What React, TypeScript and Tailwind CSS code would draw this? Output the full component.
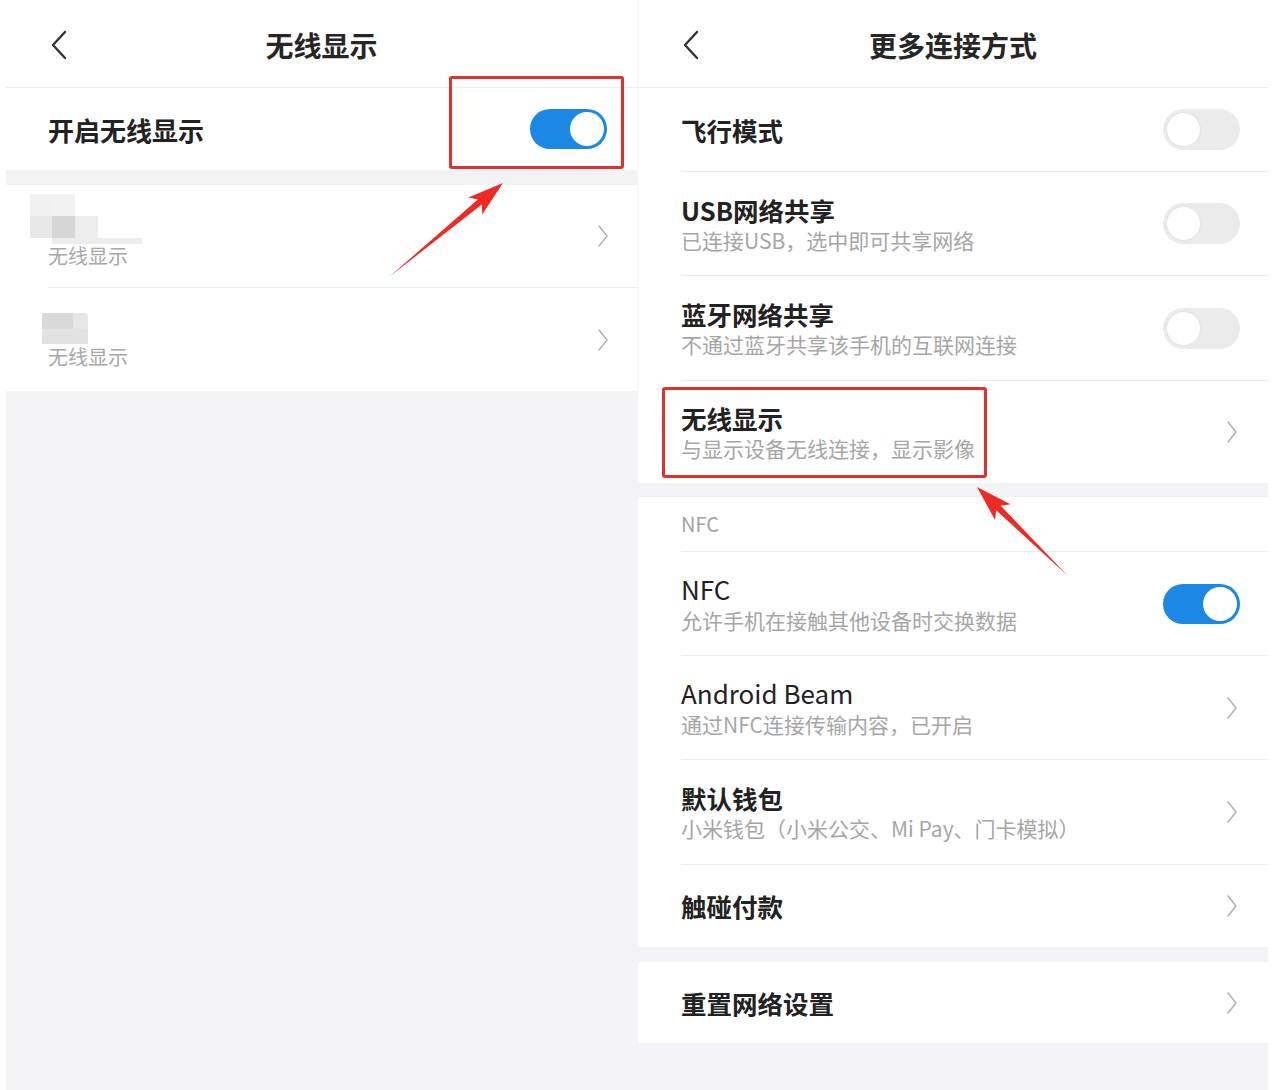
import React from "react";

const FONT = "font-['Noto_Sans_CJK_SC','Noto_Sans',sans-serif]";

function Back() {
  return (
    <svg width="18" height="30" viewBox="0 0 18 30" fill="none">
      <path d="M15 2 L3 15 L15 28" stroke="#333" strokeWidth="2.4" strokeLinecap="round" strokeLinejoin="round" />
    </svg>
  );
}

function Chevron() {
  return (
    <svg width="12" height="24" viewBox="0 0 12 24" fill="none">
      <path d="M2 2 L10 12 L2 22" stroke="#b4b4b4" strokeWidth="1.6" strokeLinecap="round" strokeLinejoin="round" />
    </svg>
  );
}

function Toggle({ on }: { on: boolean }) {
  if (on) {
    return (
      <div className="w-[77px] h-[40px] rounded-full bg-[#1b88e6] flex items-center justify-end pr-[3px] shrink-0">
        <div className="w-[34px] h-[34px] rounded-full bg-white" />
      </div>
    );
  }
  return (
    <div className="w-[77px] h-[41px] rounded-full bg-[#ebebeb] flex items-center pl-[3px] shrink-0">
      <div className="w-[35px] h-[35px] rounded-full bg-white border border-[#e2e2e2]" />
    </div>
  );
}

function Header({ title }: { title: string }) {
  return (
    <div className="h-[88px] border-b border-[#ececec] flex items-center relative">
      <div className="pl-[44px] pt-[2px] absolute left-0">
        <Back />
      </div>
      <div className="flex-1 text-center text-[28px] font-bold text-[#262626] pt-[2px]">{title}</div>
    </div>
  );
}

type Item = {
  title: string;
  sub?: string;
  right: "on" | "off" | "arrow";
  h: number;
  latin?: boolean;
  line?: boolean;
};

const ITEMS_TOP: Item[] = [
  { title: "飞行模式", right: "off", h: 84, line: true },
  { title: "USB网络共享", sub: "已连接USB，选中即可共享网络", right: "off", h: 104, line: true },
  { title: "蓝牙网络共享", sub: "不通过蓝牙共享该手机的互联网连接", right: "off", h: 105, line: true },
  { title: "无线显示", sub: "与显示设备无线连接，显示影像", right: "arrow", h: 102 },
];

const ITEMS_NFC: Item[] = [
  { title: "NFC", sub: "允许手机在接触其他设备时交换数据", right: "on", h: 104, latin: true, line: true },
  { title: "Android Beam", sub: "通过NFC连接传输内容，已开启", right: "arrow", h: 104, latin: true, line: true },
  { title: "默认钱包", sub: "小米钱包（小米公交、Mi Pay、门卡模拟）", right: "arrow", h: 105, line: true },
  { title: "触碰付款", right: "arrow", h: 82 },
];

function Row({ item }: { item: Item }) {
  return (
    <div className="pl-[43px]">
      <div
        className={`flex items-center justify-between pr-[28px] ${item.line ? "border-b border-[#ededed]" : ""}`}
        style={{ height: item.h }}
      >
        <div className={`flex flex-col ${item.latin ? "pb-[5px]" : ""}`}>
          <div
            className={`text-[#222] ${item.latin ? "text-[26px] leading-[38px] font-normal" : "text-[25.5px] leading-[32px] font-semibold"}`}
          >
            {item.title}
          </div>
          {item.sub && (
            <div className={`text-[21px] text-[#a6a6a6] ${item.latin ? "leading-[24px]" : "leading-[28px]"}`}>
              {item.sub}
            </div>
          )}
        </div>
        {item.right === "arrow" ? (
          <div className="pr-[2px]">
            <Chevron />
          </div>
        ) : (
          <Toggle on={item.right === "on"} />
        )}
      </div>
    </div>
  );
}

function Arrow({ x1, y1, x2, y2 }: { x1: number; y1: number; x2: number; y2: number }) {
  const L = Math.hypot(x2 - x1, y2 - y1);
  const a = (Math.atan2(y2 - y1, x2 - x1) * 180) / Math.PI;
  return (
    <g transform={`translate(${x1} ${y1}) rotate(${a})`}>
      <polygon
        points={`0,0 ${L - 30},-3.2 ${L - 36},-11 ${L},0 ${L - 36},11 ${L - 30},3.2`}
        fill="#ee2a24"
      />
    </g>
  );
}

export default function App() {
  return (
    <div className={`relative w-[1280px] h-[1090px] bg-white flex ${FONT}`}>
      {/* left screen */}
      <div className="w-[637px] pl-[6px] flex flex-col">
        <Header title="无线显示" />
        <div className="h-[82px] flex items-center justify-between pl-[42px] pr-[30px]">
          <span className="text-[26px] font-semibold text-[#222]">开启无线显示</span>
          <Toggle on />
        </div>
        <div className="h-[15px] bg-[#f3f3f5]" />
        <div className="pl-[42px]">
          <div className="h-[103px] border-b border-[#ededed] flex items-center justify-between pr-[28px]">
            <div className="flex flex-col -ml-[18px] pb-[10px]">
              <div className="flex">
                <div className="w-[22px] h-[22px] bg-[#f1f1f1]" />
                <div className="w-[23px] h-[22px] bg-[#f2f2f2]" />
              </div>
              <div className="flex">
                <div className="w-[22px] h-[22px] bg-[#e8e8e8]" />
                <div className="w-[23px] h-[22px] bg-[#d6d6d6]" />
                <div className="w-[23px] h-[22px] bg-[#ededed]" />
              </div>
              <div className="ml-[22px] w-[90px] h-[6px] bg-[#ececec]" />
              <div className="ml-[18px] text-[20px] leading-[24px] text-[#a8a8a8]">无线显示</div>
            </div>
            <Chevron />
          </div>
        </div>
        <div className="pl-[42px]">
          <div className="h-[103px] flex items-center justify-between pr-[28px]">
            <div className="flex flex-col -ml-[6px] pt-[4px]">
              <div className="flex">
                <div className="w-[31px] h-[16px] bg-[#d9d9d9]" />
                <div className="w-[15px] h-[16px] bg-[#e6e6e6] rounded-tr-[4px]" />
              </div>
              <div className="w-[46px] h-[15px] bg-[#e2e2e2]" />
              <div className="ml-[6px] text-[20px] leading-[26px] text-[#a8a8a8]">无线显示</div>
            </div>
            <Chevron />
          </div>
        </div>
        <div className="flex-1 bg-[#f4f4f6]" />
      </div>

      {/* right screen */}
      <div className="w-[631px] flex flex-col border-l border-[#f3f3f3]">
        <Header title="更多连接方式" />
        {ITEMS_TOP.map((it) => (
          <Row key={it.title} item={it} />
        ))}
        <div className="h-[14px] bg-[#f3f3f5]" />
        <div className="pl-[43px]">
          <div className="h-[55px] border-b border-[#ededed] flex items-center text-[20px] text-[#a3a3a3]">NFC</div>
        </div>
        {ITEMS_NFC.map((it) => (
          <Row key={it.title} item={it} />
        ))}
        <div className="h-[15px] bg-[#f3f3f5]" />
        <Row item={{ title: "重置网络设置", right: "arrow", h: 81 }} />
        <div className="flex-1 bg-[#f4f4f6]" />
      </div>
      <div className="flex-1 bg-white" />

      {/* annotations */}
      <div className="absolute left-[449px] top-[76px] w-[175px] h-[93px] border-[3px] border-[#e2302d] rounded-[3px]" />
      <div className="absolute left-[662px] top-[387px] w-[325px] h-[91px] border-[3px] border-[#e2302d] rounded-[3px]" />
      <svg className="absolute left-0 top-0 pointer-events-none" width="1280" height="1090">
        <Arrow x1={389} y1={277} x2={503} y2={183} />
        <Arrow x1={1068} y1={576} x2={977} y2={487} />
      </svg>
    </div>
  );
}
